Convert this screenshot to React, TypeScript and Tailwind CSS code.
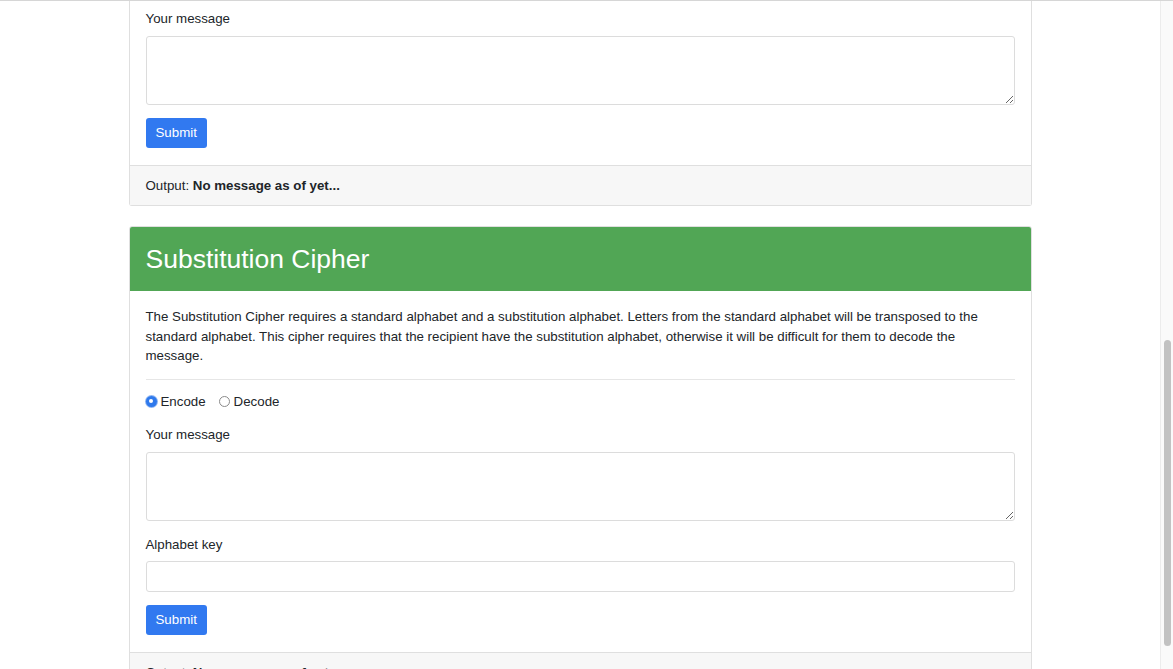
import { useState } from "react";

type Mode = "encode" | "decode";

function Radio({ checked, label, onClick }: { checked: boolean; label: string; onClick: () => void }) {
  return (
    <label onClick={onClick} className="mr-[13px] flex cursor-pointer items-center gap-[4px]">
      {checked ? (
        <span className="flex h-[11px] w-[11px] items-center justify-center rounded-full bg-[#2f79ec] ring-1 ring-[#8fb6f2]">
          <span className="h-[4px] w-[4px] rounded-full bg-white" />
        </span>
      ) : (
        <span className="h-[11px] w-[11px] rounded-full border border-[#8a8a8a] bg-white" />
      )}
      <span>{label}</span>
    </label>
  );
}

function SubmitButton() {
  return (
    <button className="h-[30px] rounded-[3px] bg-[#3179f0] px-[10px] text-[13.3px] text-white">Submit</button>
  );
}

function Output({ value }: { value: string }) {
  return (
    <div className="border-t border-[#dfdfdf] bg-[#f7f7f7] px-4 py-[10px]">
      Output: <span className="font-bold">{value || "No message as of yet..."}</span>
    </div>
  );
}

export default function App() {
  const [mode, setMode] = useState<Mode>("encode");

  return (
    <div className="flex h-[669px] overflow-hidden border-t border-[#d6d6d6] bg-white font-['Liberation_Sans',Arial,sans-serif] text-[13.3px] leading-[19.5px] text-[#212529]">
      <main className="flex-1">
        <div className="mx-auto w-[903px]">
          {/* previous cipher card, scrolled past its header */}
          <div className="rounded-b-[3px] border-x border-b border-[#dfdfdf]">
            <div className="px-4 pb-[17px] pt-[8px]">
              <label className="mb-[7px] block">Your message</label>
              <textarea className="mb-[13px] block h-[69px] w-full rounded-[3px] border border-[#dcdcdc] px-2 outline-none" />
              <SubmitButton />
            </div>
            <Output value="" />
          </div>

          <div className="mt-[20px] overflow-hidden rounded-[3px] border border-[#dfdfdf]">
            <div className="flex h-[64px] items-center bg-[#51a655] px-4">
              <h2 className="text-[26.5px] leading-[31px] text-white">Substitution Cipher</h2>
            </div>
            <div className="px-4 pb-[17px] pt-4">
              <p className="mb-[13px]">
                The Substitution Cipher requires a standard alphabet and a substitution alphabet. Letters from the
                standard alphabet will be transposed to the standard alphabet. This cipher requires that the recipient
                have the substitution alphabet, otherwise it will be difficult for them to decode the message.
              </p>
              <hr className="mb-[12px] border-t border-[#e6e6e6]" />
              <div className="mb-[14px] flex h-[19.5px] items-center">
                <Radio checked={mode === "encode"} label="Encode" onClick={() => setMode("encode")} />
                <Radio checked={mode === "decode"} label="Decode" onClick={() => setMode("decode")} />
              </div>
              <label className="mb-[7px] block">Your message</label>
              <textarea className="mb-[14px] block h-[69px] w-full rounded-[3px] border border-[#dcdcdc] px-2 outline-none" />
              <label className="mb-[7px] block">Alphabet key</label>
              <input className="mb-[13px] block h-[31px] w-full rounded-[3px] border border-[#dcdcdc] px-2 outline-none" />
              <SubmitButton />
            </div>
            <Output value="" />
          </div>
        </div>
      </main>

      {/* browser scrollbar */}
      <div className="w-[13px] border-l border-[#ececec] bg-[#fafafa]">
        <div className="mx-auto mt-[339px] h-[306px] w-[7px] rounded-full bg-[#c2c2c2]" />
      </div>
    </div>
  );
}
